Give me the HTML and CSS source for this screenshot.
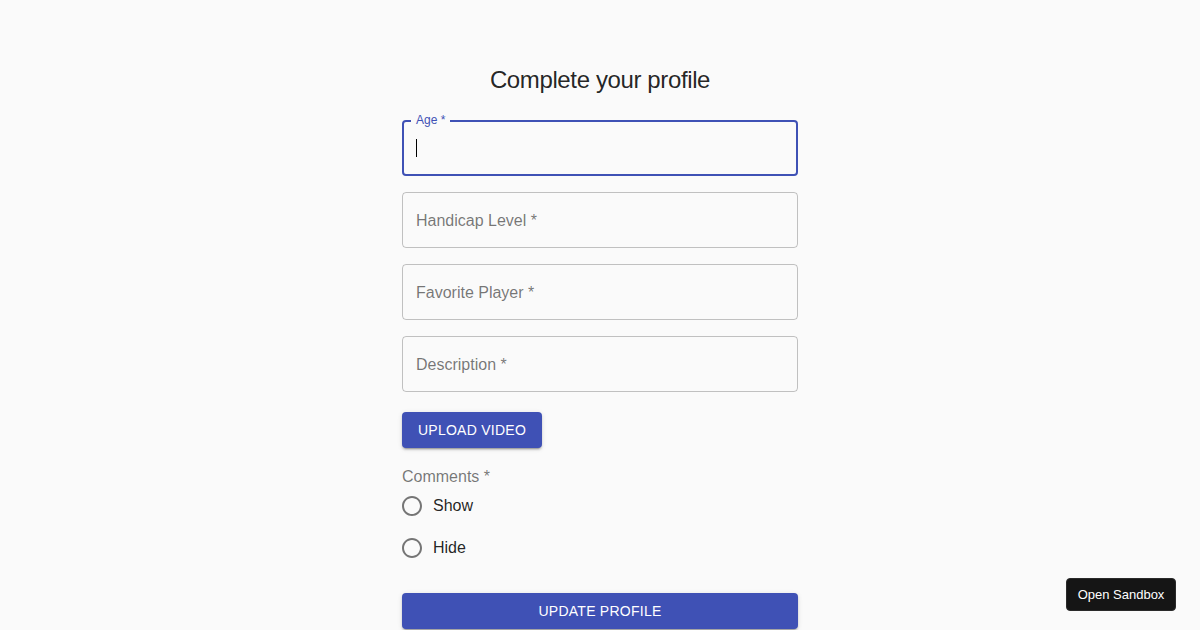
FILE: index.html
```html
<!DOCTYPE html>
<html lang="en">
<head>
<meta charset="utf-8">
<title>Complete your profile</title>
<link rel="stylesheet" href="styles.css">
</head>
<body>
<main class="page">
  <form class="form">
    <h1 class="title">Complete your profile</h1>

    <div class="field focused">
      <div class="input"><span class="caret"></span></div>
      <fieldset class="outline"><legend>Age *</legend></fieldset>
    </div>

    <div class="field">
      <div class="input"><span class="placeholder">Handicap Level *</span></div>
      <fieldset class="outline"><legend></legend></fieldset>
    </div>

    <div class="field">
      <div class="input"><span class="placeholder">Favorite Player *</span></div>
      <fieldset class="outline"><legend></legend></fieldset>
    </div>

    <div class="field">
      <div class="input"><span class="placeholder">Description *</span></div>
      <fieldset class="outline"><legend></legend></fieldset>
    </div>

    <div class="upload-row">
      <button type="button" class="btn">Upload Video</button>
    </div>

    <div class="group">
      <div class="group-label">Comments *</div>
      <label class="radio">
        <span class="radio-icon">
          <svg viewBox="0 0 24 24" width="24" height="24"><path d="M12 2C6.48 2 2 6.48 2 12s4.48 10 10 10 10-4.48 10-10S17.52 2 12 2zm0 18c-4.42 0-8-3.580-8-8s3.58-8 8-8 8 3.58 8 8-3.58 8-8 8z" fill="#757575"/></svg>
        </span>
        <span class="radio-text">Show</span>
      </label>
      <label class="radio">
        <span class="radio-icon">
          <svg viewBox="0 0 24 24" width="24" height="24"><path d="M12 2C6.48 2 2 6.48 2 12s4.48 10 10 10 10-4.48 10-10S17.52 2 12 2zm0 18c-4.42 0-8-3.58-8-8s3.58-8 8-8 8 3.58 8 8-3.58 8-8 8z" fill="#757575"/></svg>
        </span>
        <span class="radio-text">Hide</span>
      </label>
    </div>

    <button type="button" class="btn btn-full">Update Profile</button>
  </form>
</main>

<div class="sandbox">Open Sandbox</div>
</body>
</html>
```

FILE: styles.css
```css
html, body {
  margin: 0;
  padding: 0;
  background: #fafafa;
  font-family: "Liberation Sans", Arial, Helvetica, sans-serif;
  color: rgba(0, 0, 0, 0.87);
  height: 630px;
  overflow: hidden;
}

.page {
  display: flex;
  justify-content: center;
}

.form {
  width: 396px;
  display: flex;
  flex-direction: column;
  padding-top: 64px;
}

.title {
  margin: 0 0 24px;
  font-size: 24px;
  font-weight: 400;
  line-height: 32px;
  letter-spacing: -0.38px;
  text-align: center;
  color: rgba(0, 0, 0, 0.87);
}

.field {
  position: relative;
  height: 56px;
  margin-bottom: 16px;
}

.input {
  height: 56px;
  box-sizing: border-box;
  padding: 0 14px;
  display: flex;
  align-items: center;
}

.caret {
  display: block;
  width: 1px;
  height: 18px;
  background: #000;
}

.placeholder {
  font-size: 16px;
  line-height: 19px;
  color: rgba(0, 0, 0, 0.54);
}

.outline {
  position: absolute;
  top: -5px;
  left: 0;
  right: 0;
  bottom: 0;
  margin: 0;
  padding: 0 8px;
  border: 1px solid rgba(0, 0, 0, 0.23);
  border-radius: 4px;
  pointer-events: none;
}

.outline legend {
  padding: 0;
  font-size: 12px;
  line-height: 11px;
  height: 11px;
}

.focused .outline {
  border: 2px solid #3f51b5;
  padding: 0 7px;
}

.focused .outline legend {
  padding: 0 5px;
  color: #3f51b5;
}

.upload-row {
  display: flex;
  margin-top: 4px;
}

.btn {
  font-family: "Liberation Sans", Arial, Helvetica, sans-serif;
  font-size: 14px;
  font-weight: 400;
  line-height: 24px;
  letter-spacing: 0.25px;
  text-transform: uppercase;
  color: #fff;
  background: #3f51b5;
  border: 0;
  border-radius: 4px;
  padding: 6px 16px;
  height: 36px;
  box-shadow: 0 3px 1px -2px rgba(0, 0, 0, 0.2), 0 2px 2px 0 rgba(0, 0, 0, 0.14), 0 1px 5px 0 rgba(0, 0, 0, 0.12);
  cursor: pointer;
}

.group {
  display: flex;
  flex-direction: column;
  margin-top: 20px;
}

.group-label {
  font-size: 16px;
  line-height: 17px;
  color: rgba(0, 0, 0, 0.54);
}

.radio {
  display: flex;
  align-items: center;
  height: 42px;
  margin-left: -11px;
}

.radio-icon {
  display: flex;
  padding: 9px;
}

.radio-text {
  font-size: 16px;
  line-height: 24px;
}

.btn-full {
  width: 100%;
  margin-top: 24px;
}

.sandbox {
  position: fixed;
  right: 24px;
  bottom: 19px;
  width: 110px;
  height: 33px;
  box-sizing: border-box;
  display: flex;
  align-items: center;
  justify-content: center;
  background: #151515;
  border: 1px solid #2a2a2a;
  border-radius: 4px;
  color: #fff;
  font-family: "Liberation Sans", Arial, sans-serif;
  font-size: 13px;
}
```
